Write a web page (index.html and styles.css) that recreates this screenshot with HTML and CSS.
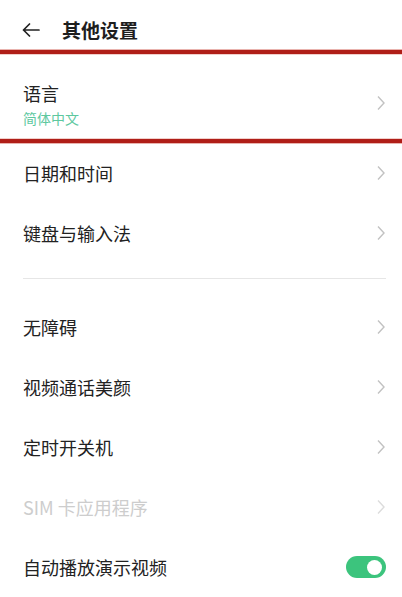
FILE: index.html
```html
<!DOCTYPE html>
<html lang="zh-CN">
<head>
<meta charset="utf-8">
<title>其他设置</title>
<link rel="stylesheet" href="styles.css">
</head>
<body>
<div class="page">
  <header class="header">
    <svg class="back" width="18" height="14" viewBox="0 0 18 14"><path d="M17 7H1.5M7.5 1L1.5 7L7.5 13" fill="none" stroke="#222" stroke-width="1.7" stroke-linecap="round" stroke-linejoin="round"/></svg>
    <h1 class="title">其他设置</h1>
  </header>

  <div class="row row-lang">
    <div class="lang-text">
      <div class="label">语言</div>
      <div class="sub">简体中文</div>
    </div>
    <svg class="chev" width="10" height="16" viewBox="0 0 10 16"><path d="M2 1.5L8 8L2 14.5" fill="none" stroke="#c2c2c2" stroke-width="1.4"/></svg>
  </div>

  <div class="row"><span class="label">日期和时间</span><svg class="chev" width="10" height="16" viewBox="0 0 10 16"><path d="M2 1.5L8 8L2 14.5" fill="none" stroke="#c2c2c2" stroke-width="1.4"/></svg></div>
  <div class="row"><span class="label">键盘与输入法</span><svg class="chev" width="10" height="16" viewBox="0 0 10 16"><path d="M2 1.5L8 8L2 14.5" fill="none" stroke="#c2c2c2" stroke-width="1.4"/></svg></div>

  <div class="divider"></div>

  <div class="row"><span class="label">无障碍</span><svg class="chev" width="10" height="16" viewBox="0 0 10 16"><path d="M2 1.5L8 8L2 14.5" fill="none" stroke="#c2c2c2" stroke-width="1.4"/></svg></div>
  <div class="row"><span class="label">视频通话美颜</span><svg class="chev" width="10" height="16" viewBox="0 0 10 16"><path d="M2 1.5L8 8L2 14.5" fill="none" stroke="#c2c2c2" stroke-width="1.4"/></svg></div>
  <div class="row"><span class="label">定时开关机</span><svg class="chev" width="10" height="16" viewBox="0 0 10 16"><path d="M2 1.5L8 8L2 14.5" fill="none" stroke="#c2c2c2" stroke-width="1.4"/></svg></div>
  <div class="row"><span class="label disabled">SIM 卡应用程序</span><svg class="chev" width="10" height="16" viewBox="0 0 10 16"><path d="M2 1.5L8 8L2 14.5" fill="none" stroke="#dcdcdc" stroke-width="1.4"/></svg></div>
  <div class="row"><span class="label">自动播放演示视频</span><span class="toggle"><span class="knob"></span></span></div>
</div>
</body>
</html>
```

FILE: styles.css
```css
html, body {
  margin: 0;
  padding: 0;
  background: #fff;
}
body {
  font-family: "Noto Sans CJK SC", "Noto Sans", "Liberation Sans", sans-serif;
  color: #222;
}
.page {
  width: 402px;
  height: 597px;
  overflow: hidden;
}
.header {
  height: 40px;
  padding-top: 10px;
  display: flex;
  align-items: center;
  padding-left: 22px;
  gap: 22px;
}
.back {
  display: block;
}
.title {
  margin: 0;
  font-size: 19px;
  font-weight: 700;
  line-height: 24px;
  color: #1e1e1e;
}
.row {
  height: 60px;
  display: flex;
  align-items: center;
  justify-content: space-between;
  padding: 0 16px 0 23px;
}
.row-lang {
  height: 85px;
  border-top: 4px solid #b01e18;
  border-bottom: 4px solid #b01e18;
  box-shadow: 0 -1px 0 #e9b3ae, 0 1px 0 #e9b3ae, inset 0 1px 0 #f1cfcb, inset 0 -1px 0 #f1cfcb;
  align-items: stretch;
}
.lang-text {
  padding-top: 28px;
}
.row-lang .chev {
  align-self: center;
  margin-top: 12px;
}
.label {
  font-size: 18px;
  line-height: 23px;
  color: #222;
}
.sub {
  margin-top: 4px;
  font-size: 14px;
  line-height: 18px;
  color: #5ec89f;
}
.disabled {
  color: #cdcdcd;
}
.chev {
  display: block;
  flex: none;
}
.divider {
  height: 1px;
  background: #e6e6e6;
  margin: 15px 16px 18px 23px;
}
.toggle {
  width: 40px;
  height: 22px;
  border-radius: 11px;
  background: #3cc47d;
  display: flex;
  align-items: center;
  justify-content: flex-end;
  padding-right: 4px;
  box-sizing: border-box;
}
.knob {
  width: 15px;
  height: 15px;
  border-radius: 50%;
  background: #fff;
}
```
